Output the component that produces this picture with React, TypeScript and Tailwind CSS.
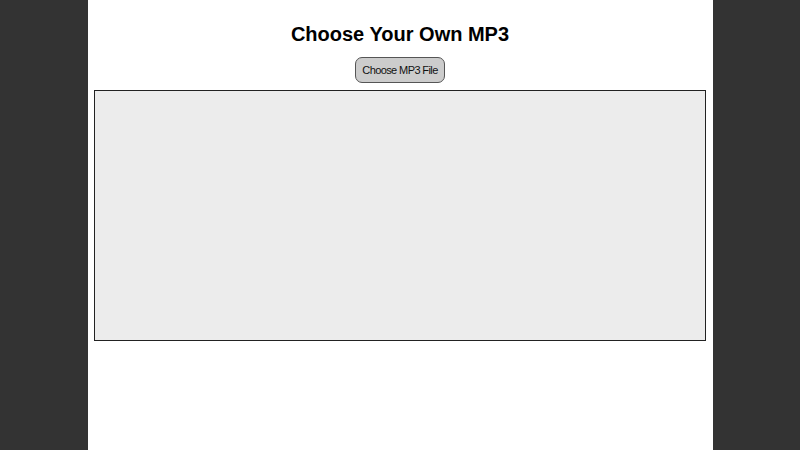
import { useRef } from 'react';

function App() {
  const inputRef = useRef<HTMLInputElement>(null);

  return (
    <div className="min-h-screen bg-[#333333] font-['Liberation_Sans',Arial,sans-serif]">
      <div className="mx-auto w-[625px] min-h-screen bg-white px-[6px] pt-[22px]">
        <h1 className="text-center text-[20px] font-bold leading-[24px] text-black">Choose Your Own MP3</h1>
        <div className="mt-[11px] flex justify-center">
          <input ref={inputRef} type="file" accept="audio/mpeg" className="hidden" />
          <button
            onClick={() => inputRef.current?.click()}
            className="h-[26px] w-[90px] whitespace-nowrap rounded-[7px] border border-[#555] bg-[#cccccc] text-[11px] leading-none tracking-[-0.6px] text-[#111]"
          >
            Choose MP3 File
          </button>
        </div>
        <canvas width={610} height={249} className="mt-[7px] block border border-[#222] bg-[#ececec]" />
      </div>
    </div>
  );
}

export default App;
